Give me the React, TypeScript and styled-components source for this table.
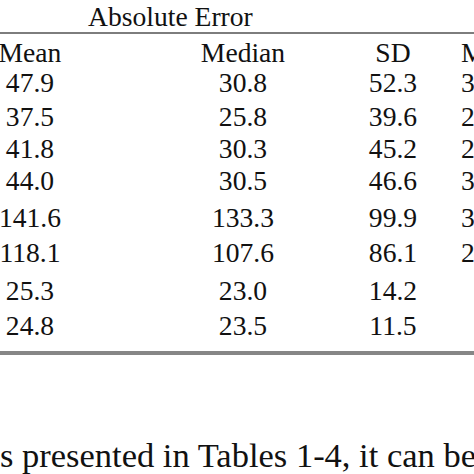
import styled, { createGlobalStyle } from 'styled-components';

interface RowData {
  pad: number;
  values: string[];
}

const header: RowData = { pad: 4, values: ['Mean', 'Median', 'SD', 'Mean'] };

const rows: RowData[] = [
  { pad: 0, values: ['47.9', '30.8', '52.3', '33.4'] },
  { pad: 4, values: ['37.5', '25.8', '39.6', '27.9'] },
  { pad: 2, values: ['41.8', '30.3', '45.2', '28.6'] },
  { pad: 2, values: ['44.0', '30.5', '46.6', '30.2'] },
  { pad: 7, values: ['141.6', '133.3', '99.9', '35.1'] },
  { pad: 5, values: ['118.1', '107.6', '86.1', '29.7'] },
  { pad: 8, values: ['25.3', '23.0', '14.2', ''] },
  { pad: 5, values: ['24.8', '23.5', '11.5', ''] },
];

const GlobalStyle = createGlobalStyle`
  html, body {
    margin: 0;
    padding: 0;
    background: #fff;
    overflow: hidden;
  }
`;

const App = () => {
  return (
    <>
      <GlobalStyle />
      <Page>
        <GroupHeading>Absolute Error</GroupHeading>
        <TableBody>
          <Row $pad={header.pad}>
            {header.values.map((v, i) => (
              <Cell key={i} $last={i === 3}>
                {v}
              </Cell>
            ))}
          </Row>
          {rows.map((row, r) => (
            <Row key={r} $pad={row.pad}>
              {row.values.map((v, i) => (
                <Cell key={i} $last={i === 3}>
                  {v}
                </Cell>
              ))}
            </Row>
          ))}
        </TableBody>
        <BodyText>s presented in Tables 1-4, it can be seen that</BodyText>
      </Page>
    </>
  );
};

const Page = styled.div`
  width: 474px;
  height: 474px;
  overflow: hidden;
  font-family: 'Liberation Serif', 'Times New Roman', serif;
  color: #111;
`;

const GroupHeading = styled.div`
  padding: 2px 0 0 88px;
  font-size: 27.6px;
  line-height: 30px;
  border-bottom: 2px solid #7d7d7d;
`;

const TableBody = styled.div`
  padding-bottom: 10px;
  border-bottom: 4px solid #868686;
`;

const Row = styled.div<{ $pad: number }>`
  display: grid;
  grid-template-columns: 262px 164px 136px 120px;
  width: max-content;
  margin-left: -101px;
  padding-top: ${({ $pad }) => $pad}px;
  font-size: 27.6px;
  line-height: 30px;
  white-space: nowrap;
`;

const Cell = styled.div<{ $last: boolean }>`
  text-align: ${({ $last }) => ($last ? 'left' : 'center')};
`;

const BodyText = styled.p`
  margin: 80px 0 0;
  font-size: 34.5px;
  line-height: 40px;
  white-space: nowrap;
`;

export default App;
